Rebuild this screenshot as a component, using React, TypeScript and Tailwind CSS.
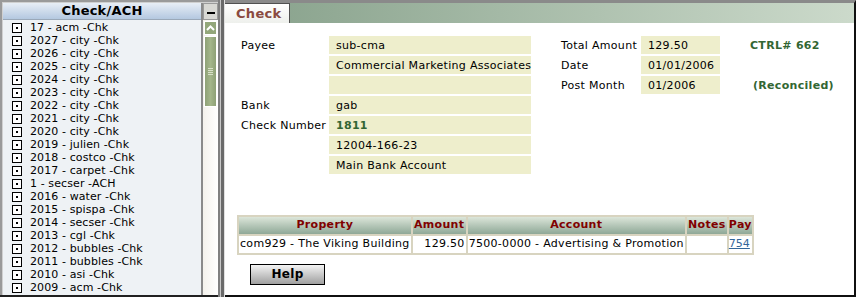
import React from "react";

const items = [
  "17 - acm -Chk",
  "2027 - city -Chk",
  "2026 - city -Chk",
  "2025 - city -Chk",
  "2024 - city -Chk",
  "2023 - city -Chk",
  "2022 - city -Chk",
  "2021 - city -Chk",
  "2020 - city -Chk",
  "2019 - julien -Chk",
  "2018 - costco -Chk",
  "2017 - carpet -Chk",
  "1 - secser -ACH",
  "2016 - water -Chk",
  "2015 - spispa -Chk",
  "2014 - secser -Chk",
  "2013 - cgl -Chk",
  "2012 - bubbles -Chk",
  "2011 - bubbles -Chk",
  "2010 - asi -Chk",
  "2009 - acm -Chk",
  "",
];

function Box() {
  return (
    <span className="relative inline-block w-[10px] h-[10px] border border-black bg-white shrink-0">
      <span className="absolute left-[3px] top-[3px] w-[2px] h-[2px] bg-black" />
    </span>
  );
}

function Cell({ children, className = "" }: { children?: React.ReactNode; className?: string }) {
  return (
    <div className={"h-[18px] bg-[#eeeecc] flex items-center pl-[7px] pt-[2px] whitespace-nowrap " + className}>{children}</div>
  );
}

function Label({ children }: { children?: React.ReactNode }) {
  return <div className="h-[18px] flex items-center pt-[2px] whitespace-nowrap">{children}</div>;
}

export default function App() {
  return (
    <div
      className="w-[856px] h-[297px] flex overflow-hidden bg-white text-[11px] text-black"
      style={{ fontFamily: '"DejaVu Sans", Verdana, sans-serif' }}
    >
      {/* Left panel */}
      <div className="w-[218px] h-full flex flex-col bg-[#9a9a9a] pl-[2px] pt-[2px] border-b-2 border-[#202020]">
        <div className="flex flex-1 min-h-0 border-l border-t border-[#d0d0d0]">
          <div className="flex-1 flex flex-col min-w-0 bg-[#eef2f5] border-r-2 border-[#8a8a8a]">
            <div className="h-[17px] flex items-center justify-center font-bold text-[13px] tracking-[0.2px] bg-gradient-to-b from-[#e8eef6] to-[#b4c8e0] border-b border-[#9aa8b8]">
              Check/ACH
            </div>
            <div className="flex-1 overflow-hidden pt-[1px] tracking-[0.1px]">
              {items.map((t, i) => (
                <div key={i} className="h-[13px] flex items-center pl-[9px] gap-[8px] whitespace-nowrap">
                  <Box />
                  {t ? <span className="leading-none">{t}</span> : null}
                </div>
              ))}
            </div>
          </div>
          <div className="w-[15px] flex flex-col bg-gradient-to-r from-[#f4f2ec] to-[#ffffff]">
            <div className="h-[17px] bg-[#d8d8d4] border border-[#9a9a9a] flex items-center justify-center">
              <span className="block w-[8px] h-[2px] bg-black mt-[3px]" />
            </div>
            <div className="mt-[1px] mx-[1px] h-[14px] bg-[#93a77a] border border-white flex items-center justify-center">
              <svg width="9" height="6" viewBox="0 0 9 6">
                <path d="M1 5 L4.5 1.5 L8 5" stroke="white" strokeWidth="2" fill="none" />
              </svg>
            </div>
            <div className="mt-[1px] mx-[1px] h-[71px] bg-gradient-to-r from-[#8ea176] via-[#a4b68a] to-[#8ea176] border border-white flex items-center justify-center">
              <div className="flex flex-col gap-[1px]">
                <span className="block w-[5px] h-[1px] bg-[#d8e0c8]" />
                <span className="block w-[5px] h-[1px] bg-[#d8e0c8]" />
                <span className="block w-[5px] h-[1px] bg-[#d8e0c8]" />
                <span className="block w-[5px] h-[1px] bg-[#d8e0c8]" />
              </div>
            </div>
          </div>
        </div>
      </div>

      {/* Divider */}
      <div className="w-[7px] h-full flex">
        <div className="w-[2px] bg-[#808080]" />
        <div className="w-[1px] bg-[#c8c8c8]" />
        <div className="w-[3px] bg-[#6a6a6a]" />
        <div className="w-[1px] bg-[#e0e0e0]" />
      </div>

      {/* Right panel */}
      <div className="flex-1 h-full flex flex-col border-t-[3px] border-t-[#8a8a8a] border-r-2 border-r-[#101010] border-b-2 border-b-[#101010] tracking-[0.3px]">
        <div className="h-[20px] flex bg-gradient-to-r from-[#86a08a] to-[#ccdacb]">
          <div className="w-[65px] bg-gradient-to-b from-[#ffffff] to-[#eef0ec] border-t border-r border-[#505050] flex items-center pl-[11px] font-bold text-[13px] text-[#8a4a40]">
            Check
          </div>
        </div>
        <div className="flex-1 bg-white pl-[16px] pt-[13px]">
          <div className="flex">
            <div className="grid grid-cols-[88px_202px] gap-y-[2px]">
              <Label>Payee</Label>
              <Cell>sub-cma</Cell>
              <div />
              <Cell>Commercial Marketing Associates</Cell>
              <div />
              <Cell />
              <Label>Bank</Label>
              <Cell>gab</Cell>
              <Label>Check Number</Label>
              <Cell className="font-bold text-[#336633]">1811</Cell>
              <div />
              <Cell>12004-166-23</Cell>
              <div />
              <Cell>Main Bank Account</Cell>
            </div>
            <div className="ml-[30px] grid grid-cols-[80px_79px_auto] gap-y-[2px] h-fit">
              <Label>Total Amount</Label>
              <Cell>129.50</Cell>
              <div className="h-[18px] flex items-center pt-[2px] pl-[30px] font-bold text-[#336633] whitespace-nowrap">CTRL# 662</div>
              <Label>Date</Label>
              <Cell>01/01/2006</Cell>
              <div />
              <Label>Post Month</Label>
              <Cell>01/2006</Cell>
              <div className="h-[18px] flex items-center pt-[2px] pl-[33px] font-bold text-[#336633] whitespace-nowrap">(Reconciled)</div>
            </div>
          </div>

          <table className="mt-[41px] -ml-[4px] border-collapse border-2 border-[#d8d4c0]">
            <thead>
              <tr className="h-[19px]">
                {[
                  ["Property", "w-[172px]"],
                  ["Amount", "w-[55px]"],
                  ["Account", "w-[215px]"],
                  ["Notes", "w-[42px]"],
                  ["Pay", "w-[18px]"],
                ].map(([h, w]) => (
                  <th
                    key={h}
                    className={
                      w +
                      " p-0 border-2 border-[#d8d4c0] bg-gradient-to-b from-[#dce6da] to-[#8fa897] text-[#800000] font-bold text-[11px] text-center"
                    }
                  >
                    {h}
                  </th>
                ))}
              </tr>
            </thead>
            <tbody>
              <tr className="h-[17px]">
                <td className="border-2 border-[#d8d4c0] px-[1px] whitespace-nowrap">com929 - The Viking Building</td>
                <td className="border-2 border-[#d8d4c0] px-[1px] text-right">129.50</td>
                <td className="border-2 border-[#d8d4c0] px-[1px] whitespace-nowrap">7500-0000 - Advertising &amp; Promotion</td>
                <td className="border-2 border-[#d8d4c0]" />
                <td className="border-2 border-[#d8d4c0] px-0 tracking-normal">
                  <span className="text-[#336699] underline">754</span>
                </td>
              </tr>
            </tbody>
          </table>

          <button className="mt-[9px] ml-[9px] w-[75px] h-[21px] border border-black bg-gradient-to-b from-[#f4f4f4] to-[#a0a0a0] font-bold text-[12px] flex items-center justify-center">
            Help
          </button>
        </div>
      </div>
    </div>
  );
}
